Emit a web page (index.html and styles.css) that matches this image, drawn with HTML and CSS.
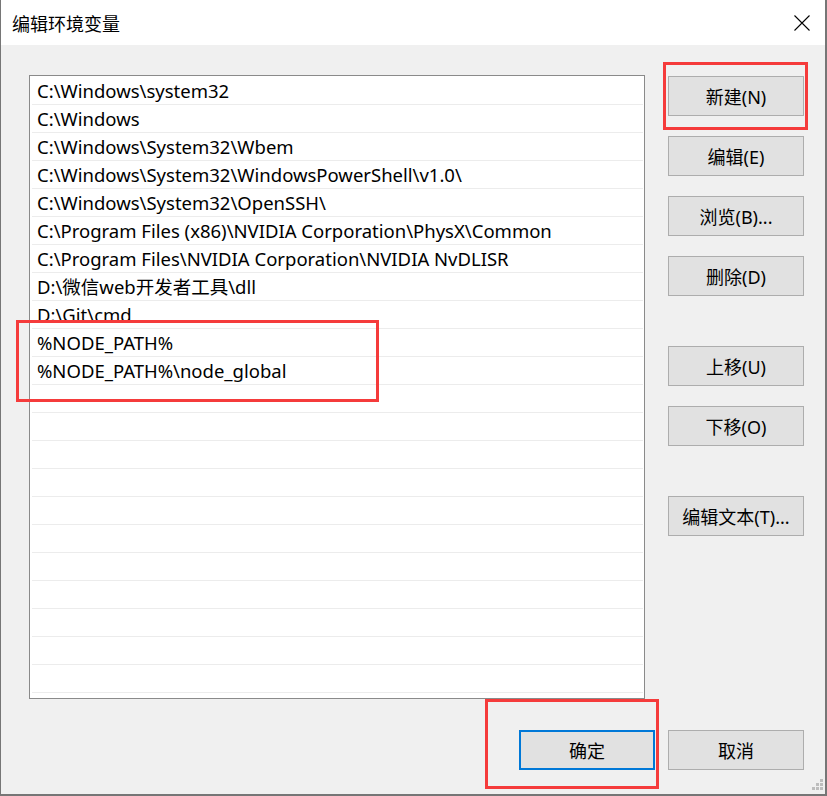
FILE: index.html
```html
<!DOCTYPE html>
<html lang="zh-CN">
<head>
  <meta charset="UTF-8">
  <title>编辑环境变量</title>
  <link rel="stylesheet" href="styles.css">
</head>
<body>

  <div class="window">
    <div class="titlebar">
      <span class="title">编辑环境变量</span>
      <svg class="close" width="16" height="16" viewBox="0 0 16 16">
        <path d="M0.5 0.5 L15.5 15.5 M15.5 0.5 L0.5 15.5" stroke="#000" stroke-width="1.1" fill="none"/>
      </svg>
    </div>

    <div class="content">
      <div class="main">
        <!-- 路径列表 -->
        <div class="list">
          <div class="row">C:\Windows\system32</div>
          <div class="row">C:\Windows</div>
          <div class="row">C:\Windows\System32\Wbem</div>
          <div class="row">C:\Windows\System32\WindowsPowerShell\v1.0\</div>
          <div class="row">C:\Windows\System32\OpenSSH\</div>
          <div class="row">C:\Program Files (x86)\NVIDIA Corporation\PhysX\Common</div>
          <div class="row">C:\Program Files\NVIDIA Corporation\NVIDIA NvDLISR</div>
          <div class="row">D:\微信web开发者工具\dll</div>
          <div class="row">D:\Git\cmd</div>
          <div class="row">%NODE_PATH%</div>
          <div class="row">%NODE_PATH%\node_global</div>
          <div class="row"></div>
          <div class="row"></div>
          <div class="row"></div>
          <div class="row"></div>
          <div class="row"></div>
          <div class="row"></div>
          <div class="row"></div>
          <div class="row"></div>
          <div class="row"></div>
          <div class="row"></div>
          <div class="row"></div>
        </div>

        <!-- 右侧按钮 -->
        <div class="side">
          <button class="btn">新建(N)</button>
          <button class="btn">编辑(E)</button>
          <button class="btn">浏览(B)...</button>
          <button class="btn">删除(D)</button>
          <button class="btn spaced">上移(U)</button>
          <button class="btn">下移(O)</button>
          <button class="btn spaced">编辑文本(T)...</button>
        </div>
      </div>

      <div class="footer">
        <button class="btn primary">确定</button>
        <button class="btn">取消</button>
      </div>
    </div>

    <div class="grip">
      <i style="left:8px;top:0"></i>
      <i style="left:4px;top:4px"></i><i style="left:8px;top:4px"></i>
      <i style="left:0;top:8px"></i><i style="left:4px;top:8px"></i><i style="left:8px;top:8px"></i>
    </div>

    <!-- 标注框 -->
    <div class="mark mark-new"></div>
    <div class="mark mark-node"></div>
    <div class="mark mark-ok"></div>
  </div>

</body>
</html>
```

FILE: styles.css
```css
* {
  box-sizing: border-box;
}

html, body {
  margin: 0;
  padding: 0;
  width: 827px;
  height: 796px;
  overflow: hidden;
  background: #f0f0f0;
  font-family: "Noto Sans", "Noto Sans CJK SC", sans-serif;
}

.window {
  position: relative;
  width: 827px;
  height: 796px;
  background: #f0f0f0;
  border-left: 1px solid #767676;
  border-right: 2px solid #767676;
  border-bottom: 2px solid #767676;
}

.titlebar {
  height: 45px;
  background: #fff;
  display: flex;
  align-items: center;
  justify-content: space-between;
  padding: 0 15px 0 11px;
}

.title {
  font-family: "Noto Sans CJK SC", sans-serif;
  font-size: 18px;
  color: #000;
}

.close {
  display: block;
}

.content {
  padding: 30px 0 0 28px;
}

.main {
  display: flex;
  align-items: flex-start;
}

/* 列表 */
.list {
  width: 616px;
  height: 624px;
  background: #fff;
  border: 1px solid #8a8a8a;
  padding: 1px 1px 0 2px;
  overflow: hidden;
}

.row {
  height: 28px;
  line-height: 27px;
  padding-left: 5px;
  border-bottom: 1px solid #ececec;
  font-size: 18.5px;
  color: #000;
  white-space: nowrap;
  overflow: hidden;
}

/* 按钮 */
.side {
  margin-left: 23px;
  padding-top: 1px;
  display: flex;
  flex-direction: column;
  gap: 20px;
}

.btn {
  width: 136px;
  height: 40px;
  margin: 0;
  padding: 0;
  background: #e1e1e1;
  border: 1px solid #adadad;
  font-family: "Noto Sans", "Noto Sans CJK SC", sans-serif;
  font-size: 18px;
  color: #000;
}

.btn.spaced {
  margin-top: 30px;
}

.btn.primary {
  border: 2px solid #0078d7;
}

.footer {
  display: flex;
  justify-content: flex-end;
  gap: 13px;
  margin-top: 31px;
  padding-right: 21px;
}

.grip {
  position: absolute;
  right: 2px;
  bottom: 4px;
  width: 11px;
  height: 11px;
}

.grip i {
  position: absolute;
  width: 3px;
  height: 3px;
  background: #bdbdbd;
}

/* 红色标注 */
.mark {
  position: absolute;
  border: 3px solid #f53b3b;
}

.mark-new {
  left: 662px;
  top: 62px;
  width: 145px;
  height: 68px;
}

.mark-node {
  left: 15px;
  top: 320px;
  width: 363px;
  height: 82px;
}

.mark-ok {
  left: 484px;
  top: 699px;
  width: 174px;
  height: 90px;
}
```
